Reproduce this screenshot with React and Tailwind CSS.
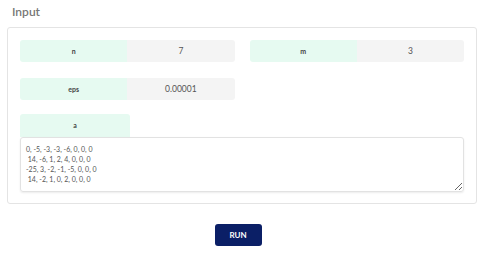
import React from "react";

const Field = ({ label, value }) => (
  <div className="flex h-[22px] rounded-[3px] overflow-hidden">
    <div className="flex-1 bg-[#e6faf1] flex items-center justify-center text-[7px] font-bold text-[#444]">{label}</div>
    <div className="flex-1 bg-[#f4f4f4] flex items-center justify-center text-[8.5px] text-[#555]">{value}</div>
  </div>
);

export default function App() {
  const text = "0, -5, -3, -3, -6, 0, 0, 0\n 14, -6, 1, 2, 4, 0, 0, 0\n-25, 3, -2, -1, -5, 0, 0, 0\n 14, -2, 1, 0, 2, 0, 0, 0";
  return (
    <div className="w-[483px] h-[254px] bg-white font-['Lato',sans-serif] relative">
      <div className="pl-[12px] pt-[3px] h-[27px] text-[12px] font-semibold text-[#777] leading-[18px]">Input</div>
      <div className="mx-[7px] w-[470px] h-[177px] border border-[#e4e4e4] rounded-[3px] px-[12px] pt-[12px]">
        <div className="grid grid-cols-2 gap-x-[15px]">
          <Field label="n" value="7" />
          <Field label="m" value="3" />
        </div>
        <div className="grid grid-cols-2 gap-x-[15px] mt-[16px]">
          <Field label="eps" value="0.00001" />
        </div>
        <div className="mt-[14px] w-[110px] h-[23px] bg-[#e6faf1] rounded-t-[3px] flex items-center justify-center text-[7px] font-bold text-[#444]">a</div>
        <textarea
          defaultValue={text}
          className="block w-full h-[55px] resize-y border border-[#e2e2e2] rounded-[3px] shadow-[0_1px_2px_rgba(0,0,0,0.08)] pl-[5px] pr-[4px] pt-[6px] text-[7px] leading-[10px] text-[#555] font-['Lato',sans-serif] outline-none whitespace-pre"
        />
      </div>
      <div className="flex justify-center pr-[7px] mt-[20px]">
        <button className="w-[47px] h-[22px] rounded-[3px] bg-[#0b1f66] text-white text-[8px] font-bold">RUN</button>
      </div>
    </div>
  );
}
